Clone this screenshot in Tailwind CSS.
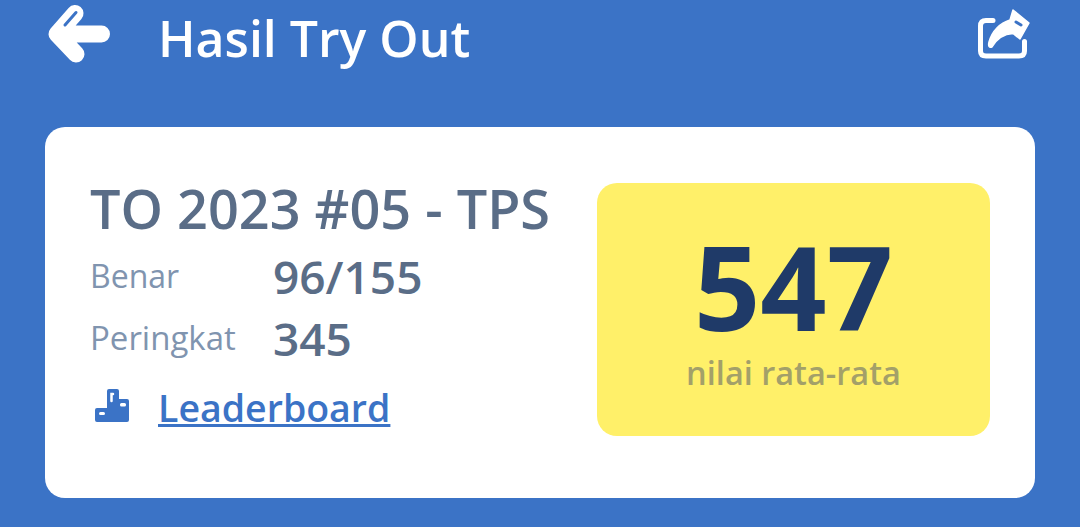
<!DOCTYPE html>
<html><head><meta charset="utf-8"><script src="https://cdn.jsdelivr.net/npm/@tailwindcss/browser@4"></script></head>
<body class="m-0">
<div class="w-[1080px] h-[527px] overflow-hidden bg-[#3b73c6] font-['Open_Sans',sans-serif] flex flex-col px-[45px]">
  <header class="h-[127px] flex items-start shrink-0">
    <svg class="w-[70px] h-[70px] shrink-0" viewBox="45 0 70 70" fill="none"><path d="M101.500 34H58M75 13.500L57 34L76 54" stroke="#fff" stroke-width="17" stroke-linecap="round" stroke-linejoin="round"/><path d="M65 25L76 12.500" stroke="#3b73c6" stroke-width="3" stroke-linecap="round"/></svg>
    <h1 class="ml-[43px] mt-[4px] text-[50px] leading-[68px] font-semibold text-white whitespace-nowrap">Hasil Try Out</h1>
    <svg class="ml-auto mt-[5px] w-[60px] h-[60px] shrink-0" viewBox="975 5 60 60" fill="none"><path d="M993 20.500H986Q980.500 20.500 980.500 26V51Q980.500 56 986 56H1019Q1024.500 56 1024.500 51V41.500" stroke="#fff" stroke-width="5" stroke-linecap="round" stroke-linejoin="round"/><path d="M1013 10L1029 23L1020 39L1013 33.500C1003 34 996 40 992 47C989 48 988 46 989 42C992 31 1000 23 1010 20Z" fill="#fff" stroke="#fff" stroke-width="1.500" stroke-linejoin="round"/><path d="M1016 22L1021 25" stroke="#3b73c6" stroke-width="3" stroke-linecap="round"/></svg>
  </header>
  <main class="w-[990px] h-[371px] bg-white rounded-[20px] flex items-start justify-between pl-[45px] pr-[45px] pt-[56px] shrink-0">
    <div class="flex flex-col -mt-[6px]">
      <h2 class="text-[54px] leading-[62px] font-semibold text-[#5a6d87] whitespace-nowrap">TO 2023 #05 - TPS</h2>
      <div class="flex items-center mt-[17px] h-[40px]"><span class="w-[183px] text-[32px] text-[#8094af]">Benar</span><span class="text-[46px] font-semibold text-[#5a6d87]">96/155</span></div>
      <div class="flex items-center mt-[22px] h-[40px]"><span class="w-[183px] text-[33px] text-[#8094af]">Peringkat</span><span class="text-[46px] font-semibold text-[#5a6d87]">345</span></div>
      <div class="flex items-center mt-[28px]">
        <svg class="w-[34px] h-[34px] shrink-0 ml-[5px] -mt-[5px]" viewBox="95 389 34 34" fill="#3b73c6"><path d="M109 389H117Q119 389 119 391V399H127Q129 399 129 401V420Q129 422 127 422H97Q95 422 95 420V410Q95 408 97 408H107V391Q107 389 109 389Z"/><path d="M113 394H111.500V401" fill="none" stroke="#fff" stroke-width="2.500" stroke-linecap="round"/><rect x="99" y="412" width="6" height="3" fill="#fff" rx="1.500"/><rect x="120" y="403" width="6" height="3.500" fill="#fff" rx="1.500"/></svg>
        <a class="ml-[29px] text-[37.500px] leading-[44px] font-semibold text-[#3b73c6] underline">Leaderboard</a>
      </div>
    </div>
    <div class="w-[393px] h-[253px] rounded-[20px] bg-[#fff069] flex flex-col items-center shrink-0">
      <div class="mt-[33px] h-[137px] text-[116px] leading-[140px] font-bold text-[#1f3a68]">547</div>
      <div class="text-[32.500px] leading-[40px] font-semibold text-[#a3a069]">nilai rata-rata</div>
    </div>
  </main>
</div>
</body></html>
